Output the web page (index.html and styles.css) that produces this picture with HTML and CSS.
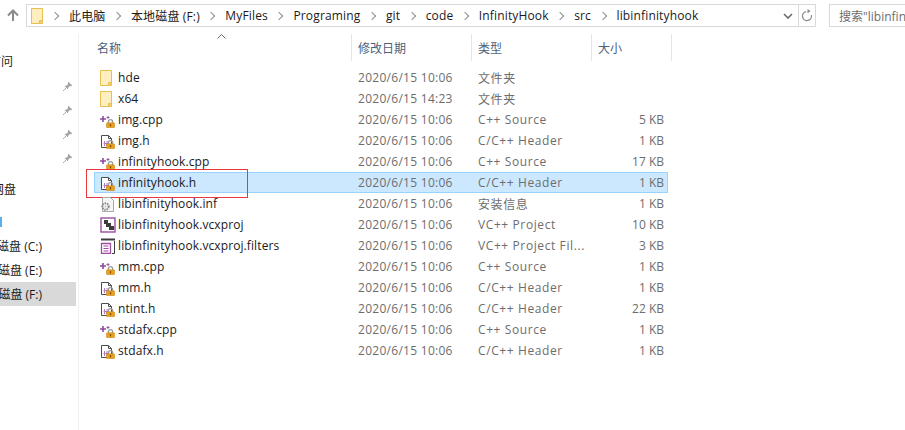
FILE: index.html
```html
<!DOCTYPE html>
<html lang="zh">
<head>
<meta charset="utf-8">
<title>libinfinityhook</title>
<link rel="stylesheet" href="styles.css">
</head>
<body>
<svg class="defs" width="0" height="0" aria-hidden="true">
  <symbol id="folder" viewBox="0 0 12 16">
    <path d="M.5.5h11v15H.5z" fill="#ffefc0" stroke="#e7c04f"/>
    <path d="M8.500 15.500v-3h3" fill="none" stroke="#e7c04f"/>
    <path d="M9 13h2v2H9z" fill="#f5d06a"/>
  </symbol>
  <symbol id="lock" viewBox="0 0 10 10">
    <path d="M2.700 5V3.200a2.300 2.300 0 0 1 4.600 0V5" fill="none" stroke="#9a9a9a" stroke-width="1.500"/>
    <rect x="0.500" y="4.500" width="9" height="5.500" rx="1" fill="#e8a21d" stroke="#c97f10" stroke-width=".6"/>
    <rect x="4.300" y="6" width="1.400" height="2.400" fill="#7a4a08"/>
  </symbol>
  <symbol id="cpp" viewBox="0 0 16 16">
    <path d="M3 4v6M0 7h6" stroke="#8f4a9e" stroke-width="1.600" fill="none"/>
    <path d="M6.500 5.500h3M8 4v3" stroke="#8f4a9e" stroke-width=".9" fill="none"/>
    <use href="#lock" x="6" y="6.500" width="9" height="9.500"/>
  </symbol>
  <symbol id="hdr" viewBox="0 0 16 16">
    <path d="M1.500 2.500h7l3 3v9h-10z" fill="#fff" stroke="#4d4d4d"/>
    <path d="M8.500 2.500v3h3" fill="none" stroke="#4d4d4d"/>
    <path d="M4.500 8v5M7 8v5M3.500 10.500h5" stroke="#b07cc0" fill="none"/>
    <use href="#lock" x="6" y="6.500" width="9" height="9.500"/>
  </symbol>
  <symbol id="inf" viewBox="0 0 16 16">
    <path d="M2.500 1.500h8l3 3v11h-11z" fill="#f6f6f6" stroke="#a8a8a8"/>
    <circle cx="5.500" cy="10.500" r="3.200" fill="none" stroke="#8a8a8a" stroke-width="2" stroke-dasharray="1.500 .8"/>
    <circle cx="5.500" cy="10.500" r="1.100" fill="#c8c8c8"/>
  </symbol>
  <symbol id="proj" viewBox="0 0 16 16">
    <rect x="1" y="1" width="14" height="14" fill="#fff" stroke="#9b4f9f" stroke-width="1.400"/>
    <path d="M4 3h4v3h3v3h3v4H9v-3H6V7H4z" fill="#3c3c3c"/>
  </symbol>
  <symbol id="filters" viewBox="0 0 16 16">
    <path d="M1 .5h14v2H1z" fill="#3c3c3c"/>
    <path d="M14.500 3v12.500H12" fill="none" stroke="#3c3c3c"/>
    <path d="M1.500 5.500h9v10h-9z" fill="#fff" stroke="#9b4f9f" stroke-width="1.300"/>
    <path d="M3.500 8h5M3.500 10.500h5M3.500 13h5" stroke="#9b4f9f"/>
  </symbol>
  <symbol id="pin" viewBox="0 0 12 12">
    <path d="M7 .8 11.200 5 9.800 5.700 8.800 5.200 6.700 7.300 6.600 9.300 2.700 5.400 4.700 5.300 6.800 3.200 6.300 2.200z" fill="#a3a3a3"/>
    <path d="M4.400 7.600 1 11" stroke="#a3a3a3"/>
  </symbol>
</svg>

<header class="toolbar">
  <svg class="up" width="12" height="12" viewBox="0 0 12 12"><path d="M6 12V1.500M1 6.500l5-5 5 5" fill="none" stroke="#8a8a8a" stroke-width="2"/></svg>
  <div class="address">
    <svg class="addr-folder" width="12" height="16"><use href="#folder"/></svg>
    <ol class="crumbs">
      <li>此电脑</li><li>本地磁盘 (F:)</li><li>MyFiles</li><li>Programing</li><li>git</li><li>code</li><li>InfinityHook</li><li>src</li><li>libinfinityhook</li>
    </ol>
    <svg class="chev" width="10" height="6" viewBox="0 0 10 6"><path d="M1 1l4 4 4-4" fill="none" stroke="#6a6a6a" stroke-width="1.600"/></svg>
    <div class="refresh">
      <svg width="12" height="13" viewBox="0 0 12 13"><path d="M6 2.500a4.500 4.500 0 1 1-4.500 4.500" fill="none" stroke="#8a8a8a" stroke-width="1.300" transform="rotate(80 6 7)"/><path d="M6.500 0v4.500L9.500 2z" fill="#8a8a8a"/></svg>
    </div>
  </div>
  <div class="search">搜索"libinfinityhook"</div>
</header>

<div class="body">
  <nav class="sidebar">
    <div class="nav-row"><span class="nav-label">快速访问</span></div>
    <div class="nav-row pinned"><svg width="11" height="11"><use href="#pin"/></svg></div>
    <div class="nav-row pinned"><svg width="11" height="11"><use href="#pin"/></svg></div>
    <div class="nav-row pinned"><svg width="11" height="11"><use href="#pin"/></svg></div>
    <div class="nav-row pinned"><svg width="11" height="11"><use href="#pin"/></svg></div>
    <div class="nav-row gap-a"><span class="nav-label">网盘</span></div>
    <div class="nav-row gap-b"><span class="nav-label thin"><i class="blue"></i></span></div>
    <div class="nav-row"><span class="nav-label">本地磁盘 (C:)</span></div>
    <div class="nav-row"><span class="nav-label">本地磁盘 (E:)</span></div>
    <div class="nav-row active"><span class="nav-label">本地磁盘 (F:)</span></div>
  </nav>

  <main class="files">
    <div class="heads">
      <svg class="caret" width="9" height="5" viewBox="0 0 9 5"><path d="M.5 4.500l4-4 4 4" fill="none" stroke="#666"/></svg>
      <div class="head h-name">名称</div>
      <div class="head h-date">修改日期</div>
      <div class="head h-type">类型</div>
      <div class="head h-size">大小</div>
    </div>
    <div class="list">
      <div class="row"><svg class="ico fold" width="12" height="16"><use href="#folder"/></svg><span class="name">hde</span><span class="date">2020/6/15 10:06</span><span class="type">文件夹</span><span class="size"></span></div>
      <div class="row"><svg class="ico fold" width="12" height="16"><use href="#folder"/></svg><span class="name">x64</span><span class="date">2020/6/15 14:23</span><span class="type">文件夹</span><span class="size"></span></div>
      <div class="row"><svg class="ico" width="16" height="16"><use href="#cpp"/></svg><span class="name">img.cpp</span><span class="date">2020/6/15 10:06</span><span class="type">C++ Source</span><span class="size">5 KB</span></div>
      <div class="row"><svg class="ico" width="16" height="16"><use href="#hdr"/></svg><span class="name">img.h</span><span class="date">2020/6/15 10:06</span><span class="type">C/C++ Header</span><span class="size">1 KB</span></div>
      <div class="row"><svg class="ico" width="16" height="16"><use href="#cpp"/></svg><span class="name">infinityhook.cpp</span><span class="date">2020/6/15 10:06</span><span class="type">C++ Source</span><span class="size">17 KB</span></div>
      <div class="row selected"><svg class="ico" width="16" height="16"><use href="#hdr"/></svg><span class="name">infinityhook.h</span><span class="date">2020/6/15 10:06</span><span class="type">C/C++ Header</span><span class="size">1 KB</span><div class="mark"></div></div>
      <div class="row"><svg class="ico" width="16" height="16"><use href="#inf"/></svg><span class="name">libinfinityhook.inf</span><span class="date">2020/6/15 10:06</span><span class="type">安装信息</span><span class="size">1 KB</span></div>
      <div class="row"><svg class="ico" width="16" height="16"><use href="#proj"/></svg><span class="name">libinfinityhook.vcxproj</span><span class="date">2020/6/15 10:06</span><span class="type">VC++ Project</span><span class="size">10 KB</span></div>
      <div class="row"><svg class="ico" width="16" height="16"><use href="#filters"/></svg><span class="name">libinfinityhook.vcxproj.filters</span><span class="date">2020/6/15 10:06</span><span class="type">VC++ Project Fil...</span><span class="size">3 KB</span></div>
      <div class="row"><svg class="ico" width="16" height="16"><use href="#cpp"/></svg><span class="name">mm.cpp</span><span class="date">2020/6/15 10:06</span><span class="type">C++ Source</span><span class="size">1 KB</span></div>
      <div class="row"><svg class="ico" width="16" height="16"><use href="#hdr"/></svg><span class="name">mm.h</span><span class="date">2020/6/15 10:06</span><span class="type">C/C++ Header</span><span class="size">1 KB</span></div>
      <div class="row"><svg class="ico" width="16" height="16"><use href="#hdr"/></svg><span class="name">ntint.h</span><span class="date">2020/6/15 10:06</span><span class="type">C/C++ Header</span><span class="size">22 KB</span></div>
      <div class="row"><svg class="ico" width="16" height="16"><use href="#cpp"/></svg><span class="name">stdafx.cpp</span><span class="date">2020/6/15 10:06</span><span class="type">C++ Source</span><span class="size">1 KB</span></div>
      <div class="row"><svg class="ico" width="16" height="16"><use href="#hdr"/></svg><span class="name">stdafx.h</span><span class="date">2020/6/15 10:06</span><span class="type">C/C++ Header</span><span class="size">1 KB</span></div>
    </div>
  </main>
</div>
</body>
</html>
```
FILE: styles.css
```css
* { box-sizing: border-box; }
html, body { margin: 0; height: 100%; }
body {
  width: 905px;
  height: 430px;
  overflow: hidden;
  background: #fff;
  font-family: "Open Sans", "Noto Sans CJK SC", sans-serif;
  font-size: 12px;
  color: #1a1a1a;
  display: flex;
  flex-direction: column;
}
.defs { position: absolute; }

.toolbar {
  height: 34px;
  flex: none;
  display: flex;
  align-items: flex-start;
  padding: 4px 0 0 7px;
}
.up { margin: 5px 7px 0 0; flex: none; }
.address {
  width: 790px;
  height: 23px;
  flex: none;
  border: 1px solid #d9d9d9;
  display: flex;
  align-items: center;
  padding-left: 4px;
}
.addr-folder { flex: none; }
.crumbs {
  list-style: none;
  margin: 0;
  padding: 0 0 0 9px;
  flex: 1;
  display: flex;
  align-items: center;
  white-space: nowrap;
  letter-spacing: .15px;
}
.crumbs li { display: flex; align-items: center; }
.crumbs li::before {
  content: "";
  width: 5px;
  height: 5px;
  border-top: 1.500px solid #8e8e8e;
  border-right: 1.500px solid #8e8e8e;
  transform: rotate(45deg);
  margin: 0 11px 0 0;
}
.crumbs li + li::before { margin-left: 8.500px; }
.chev { flex: none; margin-right: 5px; }
.refresh {
  flex: none;
  width: 17px;
  height: 21px;
  border-left: 1px solid #d9d9d9;
  display: flex;
  align-items: center;
  justify-content: center;
}
.search {
  margin-left: 13px;
  flex: 1;
  height: 23px;
  border: 1px solid #d9d9d9;
  border-right: 0;
  padding: 2px 0 0 9px;
  color: #6d6d6d;
  white-space: nowrap;
  overflow: hidden;
}

.body { flex: 1; display: flex; min-height: 0; }
.sidebar {
  width: 79px;
  flex: none;
  border-right: 1px solid #f0f0f0;
  padding-top: 15px;
  overflow: hidden;
}
.nav-row {
  height: 24px;
  width: 76px;
  display: flex;
  align-items: center;
  overflow: hidden;
}
.nav-row.gap-a { margin-top: 7px; }
.nav-row.gap-b { margin-top: 9px; }
.nav-row.pinned { justify-content: flex-end; padding-right: 3px; }
.nav-row.active { background: #d9d9d9; }
.nav-row:nth-child(2) { margin-top: 1px; }
.nav-label {
  width: 42px;
  flex: none;
  display: flex;
  justify-content: flex-end;
  white-space: nowrap;
}
.nav-label.thin { width: 2px; }
.nav-row:first-child .nav-label { width: 13px; }
.nav-row:nth-child(6) .nav-label { width: 16px; }
.blue { display: block; width: 2px; height: 10px; background: #5aafef; flex: none; }

.files { flex: 1; min-width: 0; }
.heads {
  position: relative;
  height: 27px;
  display: flex;
  padding-left: 12px;
}
.caret { position: absolute; left: 138px; top: 0; }
.head {
  height: 27px;
  color: #4c607a;
  padding: 5px 0 0 6px;
  border-right: 1px solid #e5e5e5;
}
.h-name { width: 261px; }
.h-date { width: 120px; }
.h-type { width: 120px; }
.h-size { width: 80px; }

.list { padding: 6px 0 0 15px; }
.row {
  position: relative;
  width: 574px;
  height: 21px;
  display: flex;
  align-items: center;
  white-space: nowrap;
  color: #6d6d6d;
  border: 1px solid transparent;
}
.row.selected { background: #cce8ff; border-color: #99d1ff; }
.ico { flex: none; margin-left: 5px; }
.fold { margin-right: 4px; }
.name { width: 242px; padding-left: 2px; color: #1a1a1a; flex: none; letter-spacing: .1px; }
.date { width: 120px; flex: none; letter-spacing: .28px; }
.type { width: 120px; flex: none; letter-spacing: .6px; }
.size { width: 66px; flex: none; text-align: right; }
.mark {
  position: absolute;
  left: -9px;
  top: -4px;
  width: 162px;
  height: 29px;
  border: 1px solid #e8383c;
}
```
